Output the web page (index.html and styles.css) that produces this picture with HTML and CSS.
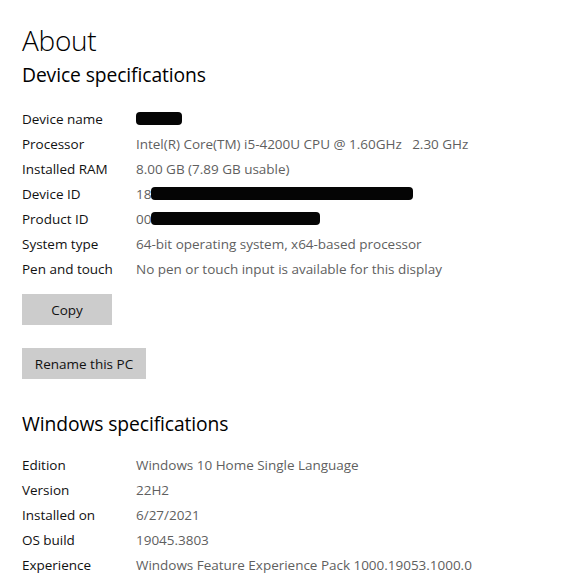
FILE: index.html
```html
<!DOCTYPE html>
<html>
<head>
<meta charset="utf-8">
<link rel="stylesheet" href="styles.css">
</head>
<body>
<main class="page">
  <h1 class="title">About</h1>
  <h2 class="section">Device specifications</h2>
  <div class="specs">
    <div class="row"><span class="label">Device name</span><span class="value"><span class="redact r-name"></span></span></div>
    <div class="row"><span class="label">Processor</span><span class="value">Intel(R) Core(TM) i5-4200U CPU @ 1.60GHz &nbsp; 2.30 GHz</span></div>
    <div class="row"><span class="label">Installed RAM</span><span class="value">8.00 GB (7.89 GB usable)</span></div>
    <div class="row"><span class="label">Device ID</span><span class="value">18<span class="redact r-device"></span></span></div>
    <div class="row"><span class="label">Product ID</span><span class="value">00<span class="redact r-product"></span></span></div>
    <div class="row"><span class="label">System type</span><span class="value">64-bit operating system, x64-based processor</span></div>
    <div class="row"><span class="label">Pen and touch</span><span class="value">No pen or touch input is available for this display</span></div>
  </div>
  <div class="actions">
    <button class="btn btn-copy">Copy</button>
    <button class="btn btn-rename">Rename this PC</button>
  </div>
  <h2 class="section section-win">Windows specifications</h2>
  <div class="specs">
    <div class="row"><span class="label">Edition</span><span class="value">Windows 10 Home Single Language</span></div>
    <div class="row"><span class="label">Version</span><span class="value">22H2</span></div>
    <div class="row"><span class="label">Installed on</span><span class="value">6/27/2021</span></div>
    <div class="row"><span class="label">OS build</span><span class="value">19045.3803</span></div>
    <div class="row"><span class="label">Experience</span><span class="value">Windows Feature Experience Pack 1000.19053.1000.0</span></div>
  </div>
</main>
</body>
</html>
```
FILE: styles.css
```css
html, body {
  margin: 0;
  padding: 0;
  background: #ffffff;
}
body {
  font-family: "Open Sans", "Noto Sans", sans-serif;
  color: #000;
  overflow: hidden;
}
.page {
  padding: 20px 0 0 22px;
}
.title {
  margin: 0;
  font-weight: 300;
  font-size: 28px;
  line-height: 40px;
  letter-spacing: -0.3px;
}
.section {
  margin: 0;
  font-weight: 400;
  font-size: 19.3px;
  line-height: 30px;
  letter-spacing: -0.1px;
}
.specs {
  margin-top: 16px;
  display: flex;
  flex-direction: column;
}
.row {
  display: flex;
  height: 25px;
  align-items: center;
  font-size: 13.5px;
  letter-spacing: -0.02px;
}
.label {
  width: 114px;
  flex: none;
  color: #111;
}
.value {
  color: #5f5f5f;
  display: flex;
  align-items: center;
  white-space: pre;
}
.redact {
  display: inline-block;
  background: #050505;
  border-radius: 4px;
}
.r-name { width: 46px; height: 13px; }
.r-device { width: 262px; height: 13px; }
.r-product { width: 169px; height: 13px; }
.actions {
  display: flex;
  flex-direction: column;
  align-items: flex-start;
  gap: 23px;
  margin-top: 13px;
}
.btn {
  font-family: inherit;
  font-size: 13.5px;
  color: #111;
  background: #cccccc;
  border: none;
  height: 31px;
  padding: 0;
}
.btn-copy { width: 90px; }
.btn-rename { width: 124px; }
.section-win {
  margin-top: 30px;
}
.section-win + .specs {
  margin-top: 13px;
}
```
